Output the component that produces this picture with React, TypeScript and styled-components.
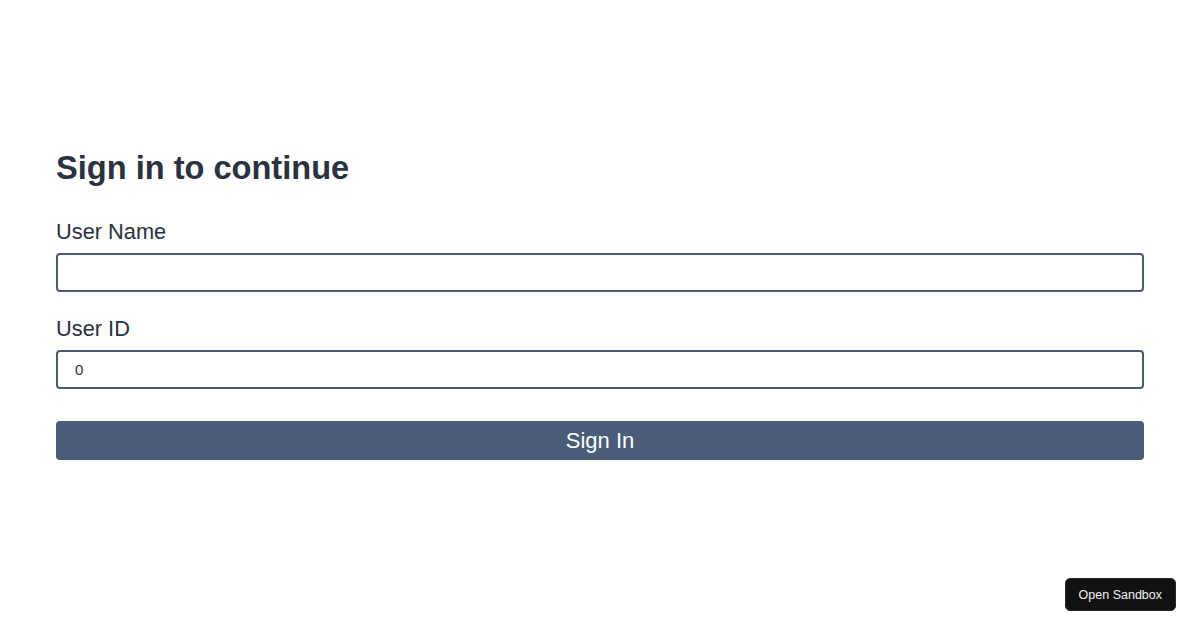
import { FC, useState } from "react";
import styled, { createGlobalStyle } from "styled-components";

const GlobalStyle = createGlobalStyle`
  html, body {
    margin: 0;
    padding: 0;
    background: #ffffff;
    font-family: "Liberation Sans", Arial, sans-serif;
    color: #2a3140;
  }
  * {
    box-sizing: border-box;
  }
`;

const App: FC = () => {
  const [userName, setUserName] = useState("");
  const [userId, setUserId] = useState("0");

  return (
    <>
      <GlobalStyle />
      <Page>
        <Form onSubmit={(e) => e.preventDefault()}>
          <Title>Sign in to continue</Title>
          <Field>
            <Label htmlFor="userName">User Name</Label>
            <Input
              id="userName"
              value={userName}
              onChange={(e) => setUserName(e.target.value)}
            />
          </Field>
          <Field>
            <Label htmlFor="userId">User ID</Label>
            <Input
              id="userId"
              type="number"
              value={userId}
              onChange={(e) => setUserId(e.target.value)}
            />
          </Field>
          <SubmitButton type="submit">Sign In</SubmitButton>
        </Form>
      </Page>
      <SandboxButton type="button">Open Sandbox</SandboxButton>
    </>
  );
};

export default App;

const Page = styled.main`
  min-height: 100vh;
  padding: 150px 56px 0;
`;

const Form = styled.form`
  display: flex;
  flex-direction: column;
`;

const Title = styled.h1`
  margin: 0 0 34px;
  font-size: 32.6px;
  line-height: 36px;
  font-weight: 700;
  color: #2a3140;
`;

const Field = styled.div`
  display: flex;
  flex-direction: column;
  gap: 9px;
  margin-bottom: 25px;

  &:last-of-type {
    margin-bottom: 32px;
  }
`;

const Label = styled.label`
  font-size: 21.8px;
  line-height: 24px;
  color: #2a3140;
`;

const Input = styled.input`
  width: 100%;
  height: 39px;
  padding: 0 17px;
  border: 2px solid #4a5b76;
  border-radius: 4px;
  font-family: "Liberation Sans", Arial, sans-serif;
  font-size: 15px;
  color: #2a3140;
  background: #ffffff;
  outline: none;
  appearance: textfield;

  &::-webkit-inner-spin-button,
  &::-webkit-outer-spin-button {
    -webkit-appearance: none;
    margin: 0;
  }
`;

const SubmitButton = styled.button`
  width: 100%;
  height: 39px;
  border: none;
  border-radius: 4px;
  background: #4a5d78;
  color: #ffffff;
  font-family: "Liberation Sans", Arial, sans-serif;
  font-size: 22px;
  cursor: pointer;
`;

const SandboxButton = styled.button`
  position: fixed;
  right: 24px;
  bottom: 19px;
  height: 33px;
  padding: 0 13px;
  border: 1px solid #2a2a2a;
  border-radius: 5px;
  background: #111111;
  color: #f2f2f2;
  font-family: "Liberation Sans", Arial, sans-serif;
  font-size: 12.5px;
  cursor: pointer;
`;
